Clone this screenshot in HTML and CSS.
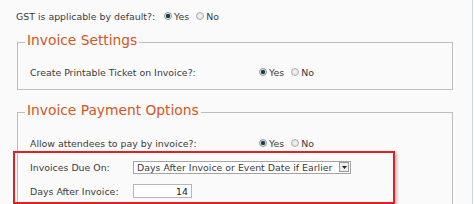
FILE: index.html
```html
<!DOCTYPE html>
<html>
  <head>
    <meta charset="utf-8" />
    <title>Invoice Settings</title>
    <link rel="stylesheet" href="styles.css">
  </head>
  <body>
    <div id="page">
      <div class="row top">
        <span class="label">GST is applicable by default?:</span>
        <span class="radios">
          <input type="radio" name="gst" checked /><span>Yes</span>
          <input type="radio" name="gst" /><span>No</span>
        </span>
      </div>

      <fieldset class="section first">
        <legend>Invoice Settings</legend>
        <div class="row">
          <span class="label wide">Create Printable Ticket on Invoice?:</span>
          <span class="radios">
            <input type="radio" name="ticket" checked /><span>Yes</span>
            <input type="radio" name="ticket" /><span>No</span>
          </span>
        </div>
      </fieldset>

      <fieldset class="section">
        <legend>Invoice Payment Options</legend>
        <div class="row">
          <span class="label wide">Allow attendees to pay by invoice?:</span>
          <span class="radios">
            <input type="radio" name="pay" checked /><span>Yes</span>
            <input type="radio" name="pay" /><span>No</span>
          </span>
        </div>
        <div class="row">
          <span class="label">Invoices Due On:</span>
          <span class="select">
            <span class="value">Days After Invoice or Event Date if Earlier</span>
            <span class="arrow">
              <svg width="5" height="3" viewBox="0 0 5 3"><path d="M0 0h5L2.5 3z" fill="#222"/></svg>
            </span>
          </span>
        </div>
        <div class="row">
          <span class="label">Days After Invoice:</span>
          <input class="days" type="text" value="14" />
        </div>
      </fieldset>

      <div class="highlight"></div>
    </div>
  </body>
</html>
```

FILE: styles.css
```css
* {
  box-sizing: border-box;
}
body {
  margin: 0;
  background-color: #fff;
  font-family: "DejaVu Sans", Verdana, sans-serif;
  font-size: 9.4px;
  color: #3a3a3a;
}
#page {
  position: relative;
  width: 473px;
  height: 204px;
  overflow: hidden;
  background-color: #fafafa;
  border-right: 1px solid #c9d8e8;
}
.row {
  display: flex;
  align-items: center;
  height: 14px;
}
.row.top {
  margin: 9px 0 0 16px;
}
.label {
  margin-right: 9px;
}
.section .label {
  width: 103px;
  margin-right: 0;
}
.section .label.wide {
  width: 229px;
}
.radios {
  display: flex;
  align-items: center;
}
.radios input {
  appearance: none;
  width: 8px;
  height: 8px;
  margin: 0 2px 0 0;
  border: 1px solid #a9aeb2;
  border-radius: 50%;
  background: radial-gradient(circle, #f4f4f4 0, #dcdcdc 100%);
}
.radios input:checked {
  border-color: #8a9498;
  background: radial-gradient(circle, #1c3f4c 0, #1c3f4c 45%, #e8eced 60%);
}
.radios span {
  margin-right: 7px;
}
.section {
  margin: 0 0 0 17px;
  width: 436px;
  border: 1px solid #bdbdbd;
  padding: 0 0 0 12px;
}
.section.first {
  margin-top: 9px;
  height: 58px;
  padding-top: 13px;
}
.section + .section {
  margin-top: 12px;
  height: 120px;
  padding-top: 14px;
}
.section + .section .row {
  margin-bottom: 10px;
}
legend {
  font-size: 13.8px;
  color: #d2561f;
  padding: 0 2px 4px;
  margin-left: -5px;
  line-height: 16px;
}
.select {
  display: flex;
  align-items: center;
  width: 218px;
  height: 13px;
  border: 1px solid #a5a5a5;
  background-color: #fff;
  padding-left: 3px;
}
.select .value {
  flex: 1;
}
.arrow {
  display: flex;
  align-items: center;
  justify-content: center;
  width: 10px;
  height: 10px;
  margin-right: 1px;
  border: 1px solid #9a9a9a;
  background-color: #ececec;
}
.days {
  width: 59px;
  height: 14px;
  border: 1px solid #b5b5b5;
  padding: 0 3px;
  margin: 0;
  font: inherit;
  color: #222;
  text-align: right;
  background-color: #fff;
}
.highlight {
  position: absolute;
  left: 13px;
  top: 151px;
  width: 382px;
  height: 53px;
  border: 2px solid #e02225;
  box-shadow: 2px 2px 3px rgba(0, 0, 0, 0.25);
}
```
